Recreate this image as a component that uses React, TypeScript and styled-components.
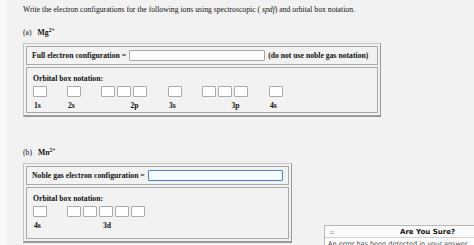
import React, { FC } from 'react'
import styled, { createGlobalStyle } from 'styled-components'

const GlobalStyle = createGlobalStyle`
  html, body {
    margin: 0;
    padding: 0;
    background: #f8f8f8;
    overflow: hidden;
  }
`

const Page = styled.div`
  position: relative;
  width: 474px;
  height: 245px;
  margin-left: 7px;
  padding: 5px 0 0 16px;
  box-sizing: border-box;
  background: #f2f2f2;
  font-family: 'Liberation Serif', 'Times New Roman', serif;
  font-size: 7.7px;
  color: #111;
  overflow: hidden;
`

const Intro = styled.div`
  height: 10px;
  line-height: 10px;
`

const Part = styled.div<{ top: number }>`
  display: flex;
  align-items: baseline;
  gap: 6px;
  height: 10px;
  line-height: 10px;
  margin-top: ${(p) => p.top}px;
`

const Ion = styled.span`
  font-weight: bold;
  sup {
    font-size: 5.5px;
    vertical-align: 3px;
  }
`

const Table = styled.div<{ width: number }>`
  display: flex;
  flex-direction: column;
  gap: 2px;
  width: ${(p) => p.width}px;
  margin-top: 8px;
  padding: 2px;
  box-sizing: border-box;
  border: 1px solid #c4c4c4;
  border-right-color: #9a9a9a;
  border-bottom: 2px solid #9a9a9a;
  background: #f2f2f2;
`

const Cell = styled.div`
  border: 1px solid #a8a8a8;
  padding: 0 6px;
  font-weight: bold;
`

const ConfigRow = styled(Cell)`
  display: flex;
  align-items: center;
  height: 19px;
  box-sizing: border-box;
  gap: 3px;
  padding-left: 5px;
  white-space: nowrap;
`

const Field = styled.div<{ width: number; focused?: boolean }>`
  flex: none;
  width: ${(p) => p.width}px;
  height: 11px;
  box-sizing: border-box;
  background: ${(p) => (p.focused ? '#f5fbff' : '#fff')};
  border: 1px solid ${(p) => (p.focused ? '#4a7fc9' : '#a9a9a9')};
  border-radius: 1px;
`

const OrbitalCell = styled(Cell)<{ h: number }>`
  height: ${(p) => p.h}px;
  box-sizing: border-box;
  padding-top: 6px;
`

const Caption = styled.div`
  line-height: 9px;
`

const Orbitals = styled.div`
  display: flex;
  margin-top: 3px;
`

const Orbital = styled.div<{ width: number }>`
  display: flex;
  flex-direction: column;
  align-items: center;
  width: ${(p) => p.width}px;
`

const Boxes = styled.div`
  display: flex;
  gap: 2px;
  align-self: flex-start;
`

const Box = styled.div`
  width: 14px;
  height: 11px;
  box-sizing: border-box;
  background: #fff;
  border: 1px solid #ababab;
  border-radius: 1px;
`

const SubLabel = styled.div<{ left?: boolean }>`
  margin-top: 4px;
  line-height: 9px;
  align-self: ${(p) => (p.left ? 'flex-start' : 'center')};
  padding-left: ${(p) => (p.left ? 1 : 0)}px;
`

const Dialog = styled.div`
  position: absolute;
  left: 317px;
  top: 225px;
  width: 170px;
  background: #fff;
  border: 1px solid #b9b9b9;
  font-family: 'DejaVu Sans', Verdana, sans-serif;
`

const DialogHead = styled.div`
  display: flex;
  align-items: center;
  height: 11px;
  padding: 0 5px;
  background: #fafafa;
  border-bottom: 1px solid #d0d0d0;
  font-size: 7px;
  font-weight: bold;
  color: #111;
`

const Grip = styled.span`
  font-size: 5px;
  color: #777;
  width: 70px;
`

const DialogBody = styled.div`
  padding: 2px 3px;
  font-size: 6.5px;
  color: #444;
  white-space: nowrap;
`

type Group = { label: string; boxes: number; width: number; left?: boolean }

const OrbitalRow: FC<{ groups: Group[] }> = ({ groups }) => (
  <Orbitals>
    {groups.map((g) => (
      <Orbital key={g.label} width={g.width}>
        <Boxes>
          {Array.from({ length: g.boxes }).map((_, i) => (
            <Box key={i} />
          ))}
        </Boxes>
        <SubLabel left={g.left}>{g.label}</SubLabel>
      </Orbital>
    ))}
  </Orbitals>
)

const mgGroups: Group[] = [
  { label: '1s', boxes: 1, width: 34, left: true },
  { label: '2s', boxes: 1, width: 34, left: true },
  { label: '2p', boxes: 3, width: 67 },
  { label: '3s', boxes: 1, width: 34, left: true },
  { label: '3p', boxes: 3, width: 67 },
  { label: '4s', boxes: 1, width: 34, left: true }
]

const mnGroups: Group[] = [
  { label: '4s', boxes: 1, width: 34, left: true },
  { label: '3d', boxes: 5, width: 80 }
]

const App: FC = () => (
  <>
    <GlobalStyle />
    <Page>
      <Intro>
        Write the electron configurations for the following ions using spectroscopic ( <i>spdf</i>) and
        orbital box notation.
      </Intro>

      <Part top={10}>
        <span>(a)</span>
        <Ion>
          Mg<sup>2+</sup>
        </Ion>
      </Part>
      <Table width={358}>
        <ConfigRow>
          Full electron configuration =
          <Field width={136} />
          (do not use noble gas notation)
        </ConfigRow>
        <OrbitalCell h={46}>
          <Caption>Orbital box notation:</Caption>
          <OrbitalRow groups={mgGroups} />
        </OrbitalCell>
      </Table>

      <Part top={28}>
        <span>(b)</span>
        <Ion>
          Mn<sup>2+</sup>
        </Ion>
      </Part>
      <Table width={269}>
        <ConfigRow>
          Noble gas electron configuration =
          <Field width={135} focused />
        </ConfigRow>
        <OrbitalCell h={52}>
          <Caption>Orbital box notation:</Caption>
          <OrbitalRow groups={mnGroups} />
        </OrbitalCell>
      </Table>

      <Dialog>
        <DialogHead>
          <Grip>::</Grip>
          Are You Sure?
        </DialogHead>
        <DialogBody>An error has been detected in your answer.</DialogBody>
      </Dialog>
    </Page>
  </>
)

export default App
